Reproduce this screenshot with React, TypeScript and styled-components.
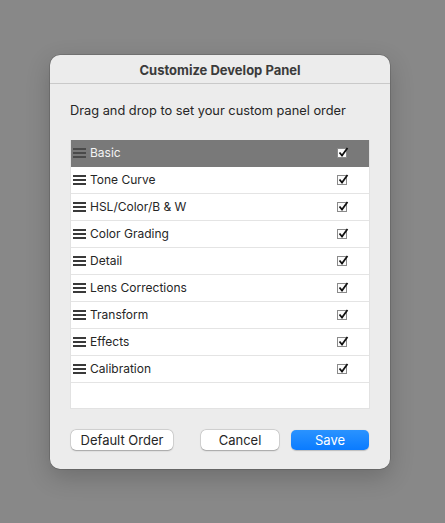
import React from "react";
import styled, { createGlobalStyle } from "styled-components";

const Global = createGlobalStyle`
  html, body { margin: 0; padding: 0; background: #888888; }
  body { font-family: "Inter", "Liberation Sans", sans-serif; }
  * { box-sizing: border-box; }
`;

const Page = styled.div`
  width: 445px;
  height: 523px;
  padding: 55px 0 0 50px;
  background: #888888;
`;

const Dialog = styled.div`
  width: 340px;
  height: 414px;
  background: #ececec;
  border-radius: 10px;
  box-shadow: 0 0 0 0.5px rgba(0,0,0,0.25), 0 8px 24px rgba(0,0,0,0.2);
  display: flex;
  flex-direction: column;
  overflow: hidden;
`;

const TitleBar = styled.div`
  height: 29px;
  border-bottom: 1px solid #c9c9c9;
  display: flex;
  align-items: center;
  justify-content: center;
  font-size: 13px;
  font-weight: 700;
  color: #3b3b3b;
  padding-top: 1px;
`;

const Body = styled.div`
  padding: 19px 20px 0 20px;
  display: flex;
  flex-direction: column;
`;

const Subtitle = styled.div`
  font-size: 12.8px;
  line-height: 16px;
  color: #262626;
`;

const List = styled.div`
  margin-top: 21px;
  height: 269px;
  background: #ffffff;
  border: 1px solid #e2e2e2;
  border-top: none;
  display: flex;
  flex-direction: column;
`;

const Row = styled.div<{ $active?: boolean }>`
  height: 27px;
  flex: 0 0 27px;
  display: flex;
  align-items: center;
  padding: 0 22px 1px 2px;
  background: ${(p) => (p.$active ? "#797979" : "#ffffff")};
  border-bottom: 1px solid ${(p) => (p.$active ? "#797979" : "#e4e4e4")};
  color: ${(p) => (p.$active ? "#f4f4f4" : "#262626")};
  font-size: 12px;
`;

const Grip = styled.div<{ $active?: boolean }>`
  width: 13px;
  height: 10px;
  margin-right: 4px;
  margin-top: 1px;
  display: flex;
  flex-direction: column;
  justify-content: space-between;
  span {
    display: block;
    height: 2px;
    background: ${(p) => (p.$active ? "#4a4a4a" : "#3a3a3a")};
  }
`;

const Label = styled.div`
  flex: 1;
`;

const Check = styled.div`
  width: 10px;
  height: 10px;
  margin-top: 1px;
  border: 1px solid #8a8a8a;
  background: #fbfbfb;
  position: relative;
  svg { position: absolute; left: 0px; top: -2px; }
`;

const Footer = styled.div`
  margin-top: 21px;
  display: flex;
  align-items: center;
  padding: 0 1px;
`;

const Button = styled.button<{ $w: number; $primary?: boolean }>`
  width: ${(p) => p.$w}px;
  height: 20px;
  border-radius: 5px;
  border: none;
  font-family: inherit;
  font-size: 13px;
  padding: 0;
  color: ${(p) => (p.$primary ? "#ffffff" : "#262626")};
  background: ${(p) => (p.$primary ? "linear-gradient(#2a93ff, #0a7bff)" : "#ffffff")};
  box-shadow: ${(p) =>
    p.$primary
      ? "0 0.5px 1px rgba(0,0,0,0.2)"
      : "0 0 0 0.5px rgba(0,0,0,0.15), 0 0.5px 1.5px rgba(0,0,0,0.25)"};
`;

const Spacer = styled.div`
  flex: 1;
`;

const Gap = styled.div`
  width: 12px;
`;

const items = [
  "Basic",
  "Tone Curve",
  "HSL/Color/B & W",
  "Color Grading",
  "Detail",
  "Lens Corrections",
  "Transform",
  "Effects",
  "Calibration",
];

export default function App() {
  return (
    <Page>
      <Global />
      <Dialog>
        <TitleBar>Customize Develop Panel</TitleBar>
        <Body>
          <Subtitle>Drag and drop to set your custom panel order</Subtitle>
          <List>
            {items.map((it, i) => (
              <Row key={it} $active={i === 0}>
                <Grip $active={i === 0}>
                  <span />
                  <span />
                  <span />
                </Grip>
                <Label>{it}</Label>
                <Check>
                  <svg width="11" height="11" viewBox="0 0 11 11">
                    <path d="M1.5 5.5 L4 8.5 L9.5 1" fill="none" stroke="#111" strokeWidth="1.8" />
                  </svg>
                </Check>
              </Row>
            ))}
          </List>
          <Footer>
            <Button $w={102}>Default Order</Button>
            <Spacer />
            <Button $w={78}>Cancel</Button>
            <Gap />
            <Button $w={78} $primary>
              Save
            </Button>
          </Footer>
        </Body>
      </Dialog>
    </Page>
  );
}
